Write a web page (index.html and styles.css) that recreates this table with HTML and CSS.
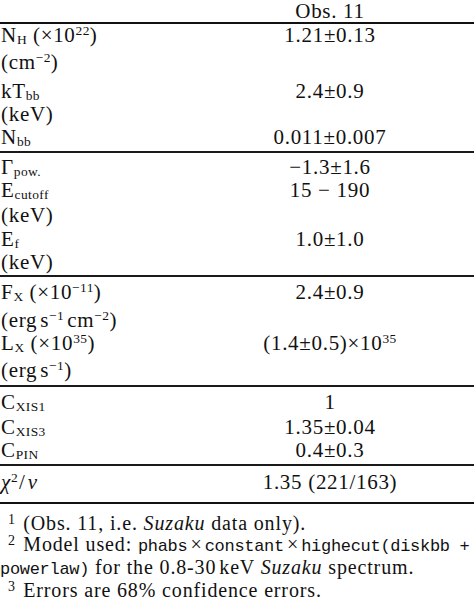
FILE: index.html
```html
<!DOCTYPE html>
<html lang="en">
<head>
<meta charset="utf-8">
<title>Obs. 11 spectral fit</title>
<link rel="stylesheet" href="styles.css">
</head>
<body>
<main class="sheet">
  <div class="hdr">
    <div class="lab"></div>
    <div class="val">Obs. 11</div>
  </div>

  <div class="grp g1">
    <div class="row">
      <div class="lab">
        <div class="ln">N<sub>H</sub> (×10<sup>22</sup>)</div>
        <div class="ln mt4">(cm<sup>−2</sup>)</div>
      </div>
      <div class="val ln">1.21±0.13</div>
    </div>
    <div class="row mt6">
      <div class="lab">
        <div class="ln">kT<sub>bb</sub></div>
        <div class="ln">(keV)</div>
      </div>
      <div class="val ln">2.4±0.9</div>
    </div>
    <div class="row">
      <div class="lab"><div class="ln">N<sub>bb</sub></div></div>
      <div class="val ln">0.011±0.007</div>
    </div>
  </div>

  <div class="grp g2">
    <div class="row">
      <div class="lab"><div class="ln">Γ<sub>pow.</sub></div></div>
      <div class="val ln">−1.3±1.6</div>
    </div>
    <div class="row">
      <div class="lab">
        <div class="ln">E<sub>cutoff</sub></div>
        <div class="ln mt2">(keV)</div>
      </div>
      <div class="val ln">15 − 190</div>
    </div>
    <div class="row mt1">
      <div class="lab">
        <div class="ln">E<sub>f</sub></div>
        <div class="ln">(keV)</div>
      </div>
      <div class="val ln">1.0±1.0</div>
    </div>
  </div>

  <div class="grp g3">
    <div class="row">
      <div class="lab">
        <div class="ln">F<sub>X</sub> (×10<sup>−11</sup>)</div>
        <div class="ln mt5">(erg<span class="th"></span>s<sup>−1</sup><span class="th"></span>cm<sup>−2</sup>)</div>
      </div>
      <div class="val ln">2.4±0.9</div>
    </div>
    <div class="row">
      <div class="lab">
        <div class="ln">L<sub>X</sub> (×10<sup>35</sup>)</div>
        <div class="ln mt4">(erg<span class="th"></span>s<sup>−1</sup>)</div>
      </div>
      <div class="val ln">(1.4±0.5)×10<sup>35</sup></div>
    </div>
  </div>

  <div class="grp g4">
    <div class="row">
      <div class="lab"><div class="ln">C<sub>XIS1</sub></div></div>
      <div class="val ln">1</div>
    </div>
    <div class="row mt2">
      <div class="lab"><div class="ln">C<sub>XIS3</sub></div></div>
      <div class="val ln">1.35±0.04</div>
    </div>
    <div class="row">
      <div class="lab"><div class="ln">C<sub>PIN</sub></div></div>
      <div class="val ln">0.4±0.3</div>
    </div>
  </div>

  <div class="grp g5">
    <div class="row">
      <div class="lab"><div class="ln"><i>χ</i><sup>2</sup><span class="sl">/</span><i>ν</i></div></div>
      <div class="val ln">1.35 (221/163)</div>
    </div>
  </div>

  <div class="notes">
    <p class="note"><sup>1</sup> (Obs. 11, i.e. <i>Suzaku</i> data only).</p>
    <p class="note"><sup>2</sup> Model used: <code>phabs</code><span class="op">×</span><code>constant</code><span class="op">×</span><code>highecut(diskbb +</code><br><code>powerlaw)</code> for the 0.8-30<span class="th"></span>keV <i>Suzaku</i> spectrum.</p>
    <p class="note"><sup>3</sup> Errors are 68% confidence errors.</p>
  </div>
</main>
</body>
</html>
```

FILE: styles.css
```css
html, body {
  margin: 0;
  padding: 0;
  background: #ffffff;
}

body {
  font-family: "Liberation Serif", "DejaVu Serif", serif;
  font-size: 21px;
  letter-spacing: 0.7px;
  color: #111111;
}

.sheet {
  width: 474px;
  overflow: hidden;
}

.hdr,
.row {
  display: grid;
  grid-template-columns: 186px 1fr;
  align-items: start;
}

.hdr {
  height: 22px;
  line-height: 22px;
  border-bottom: 2px solid #111111;
}

.lab {
  padding-left: 1px;
  white-space: nowrap;
}

.val {
  text-align: center;
  white-space: nowrap;
}

.ln {
  height: 23px;
  line-height: 23px;
  white-space: nowrap;
}

sub,
sup {
  font-size: 0.64em;
  line-height: 0;
  letter-spacing: 0.4px;
}

sub {
  vertical-align: -0.16em;
}

sup {
  vertical-align: 0.52em;
}

.th {
  display: inline-block;
  width: 3px;
}

.sl {
  padding: 0 2px 0 1px;
}

.grp {
  border-bottom: 2px solid #1a1a1a;
}

.g1 {
  padding-top: 0;
  padding-bottom: 2px;
}

.g2 {
  padding-top: 3px;
  padding-bottom: 1px;
}

.g3 {
  padding-top: 4px;
  padding-bottom: 3px;
}

.g4 {
  padding-top: 4px;
  padding-bottom: 2px;
}

.g5 {
  padding-top: 5px;
  padding-bottom: 8px;
  border-bottom-color: #111111;
}

.mt1 { margin-top: 1px; }
.mt2 { margin-top: 2px; }
.mt4 { margin-top: 4px; }
.mt5 { margin-top: 5px; }
.mt6 { margin-top: 6px; }

.notes {
  padding-top: 9px;
  font-size: 20px;
  letter-spacing: 0.85px;
}

.note {
  margin: 0;
  padding-left: 8px;
  line-height: 21px;
  white-space: nowrap;
}

.note:nth-child(2) {
  padding-left: 0;
  text-indent: 8px;
}

.note sup {
  font-size: 0.7em;
  vertical-align: 0.45em;
  margin-right: 2px;
}

code {
  font-family: "Liberation Mono", "DejaVu Sans Mono", monospace;
  font-size: 17px;
  letter-spacing: -0.3px;
}

.op {
  padding: 0 3px;
  letter-spacing: 0;
}
```
